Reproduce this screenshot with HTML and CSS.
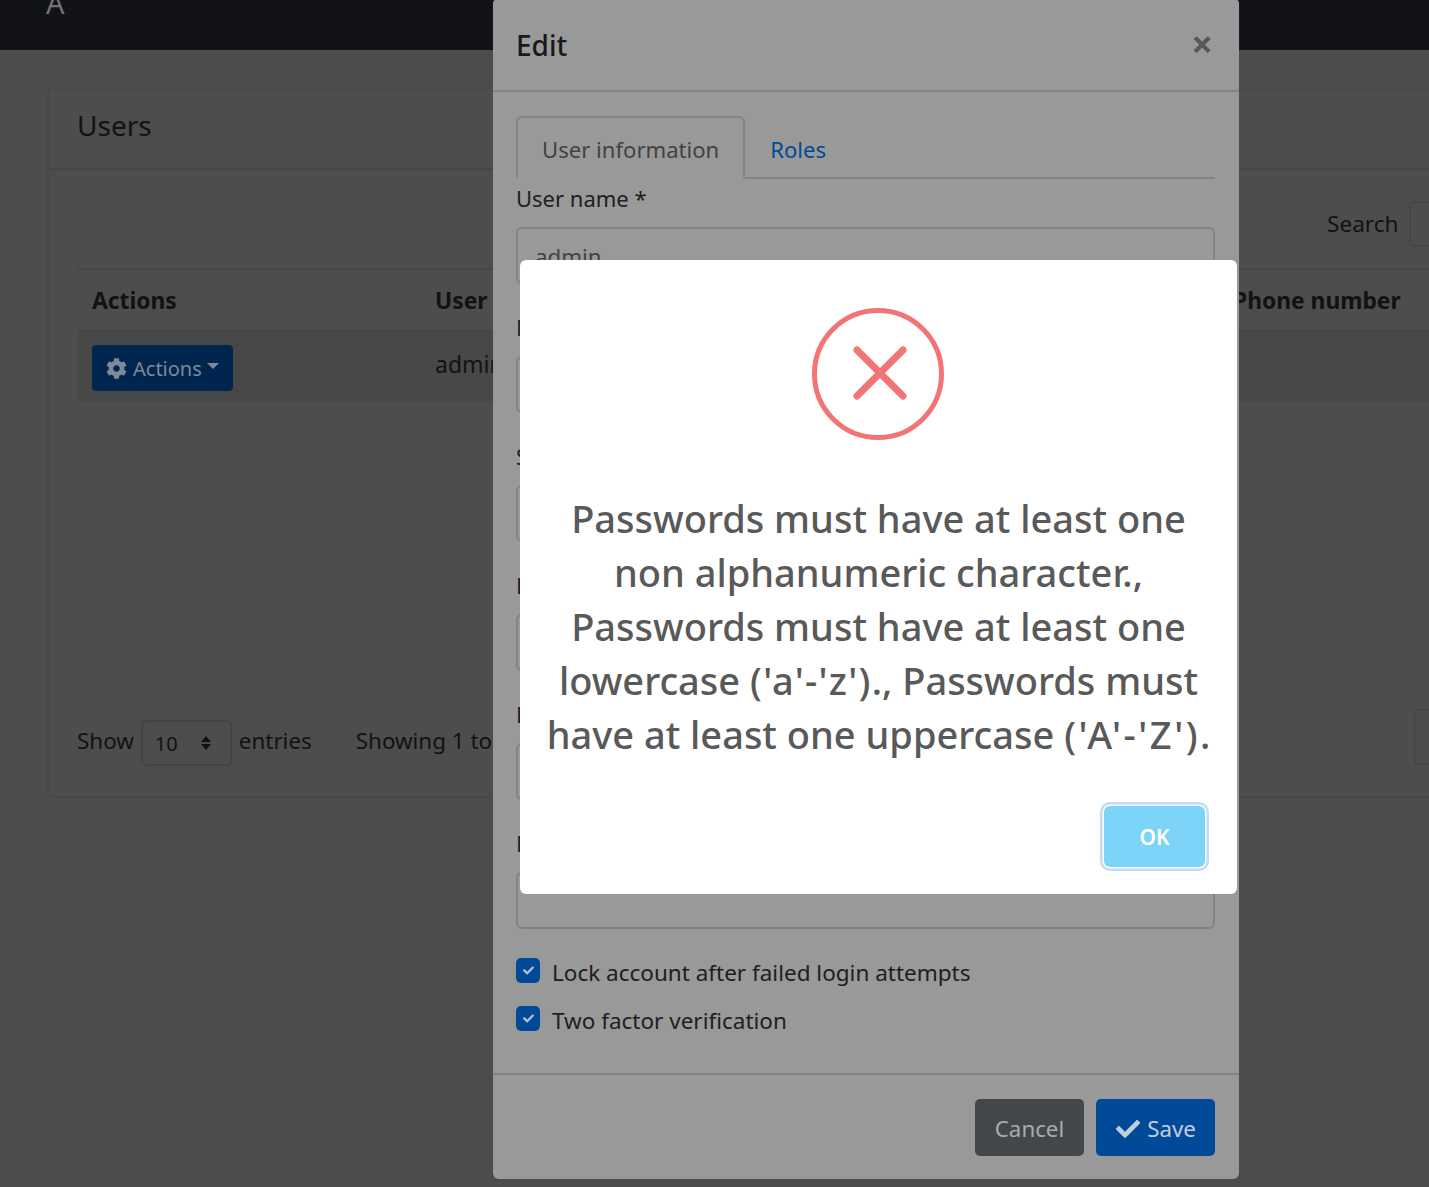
FILE: index.html
```html
<!DOCTYPE html>
<html lang="en">
<head>
<meta charset="utf-8">
<title>Users</title>
<link rel="stylesheet" href="styles.css">
</head>
<body>
<header class="navbar"><span class="brand">A</span></header>
<main class="card">
  <div class="card-head">Users</div>
  <div class="card-body">
    <div class="search-row"><span>Search</span><span class="search-box"></span></div>
    <div class="table">
      <div class="t-head">
        <div class="col-actions">Actions</div>
        <div class="col-user">User name</div>
        <div class="col-phone">Phone number</div>
      </div>
      <div class="t-row">
        <div class="col-actions">
          <span class="btn-actions">
            <svg class="gear" viewBox="0 0 512 512"><path d="M487.4 315.7l-42.6-24.6c4.3-23.2 4.3-47 0-70.2l42.6-24.6c4.9-2.8 7.1-8.6 5.5-14-11.1-35.6-30-67.8-54.7-94.6-3.8-4.1-10-5.1-14.8-2.3L380.8 110c-17.9-15.4-38.5-27.3-60.8-35.1V25.8c0-5.6-3.9-10.5-9.4-11.7-36.7-8.2-74.3-7.8-109.2 0-5.5 1.2-9.4 6.1-9.4 11.7V75c-22.2 7.9-42.8 19.8-60.8 35.1L88.7 85.5c-4.9-2.8-11-1.9-14.8 2.3-24.7 26.7-43.6 58.9-54.7 94.6-1.7 5.4.6 11.2 5.5 14L67.3 221c-4.3 23.2-4.3 47 0 70.2l-42.6 24.6c-4.9 2.8-7.1 8.6-5.5 14 11.1 35.6 30 67.8 54.7 94.6 3.8 4.1 10 5.1 14.8 2.3l42.6-24.6c17.9 15.4 38.5 27.3 60.8 35.1v49.2c0 5.6 3.9 10.5 9.4 11.7 36.7 8.2 74.3 7.8 109.2 0 5.5-1.2 9.4-6.1 9.4-11.7v-49.2c22.2-7.9 42.8-19.8 60.8-35.1l42.6 24.6c4.9 2.8 11 1.9 14.8-2.3 24.7-26.7 43.6-58.9 54.7-94.6 1.5-5.5-.7-11.3-5.6-14.1zM256 336c-44.1 0-80-35.9-80-80s35.9-80 80-80 80 35.9 80 80-35.9 80-80 80z"/></svg>
            <span>Actions</span><span class="caret"></span>
          </span>
        </div>
        <div class="col-user cell-text">admin</div>
      </div>
    </div>
    <div class="t-foot">
      <span>Show</span>
      <span class="select"><span>10</span><svg class="sort" viewBox="0 0 12 16"><path d="M6 1l5 6H1zM1 9h10l-5 6z"/></svg></span>
      <span>entries</span>
      <span class="showing">Showing 1 to 1 of 1 entries</span>
      <span class="pager"></span>
    </div>
  </div>
</main>

<section class="modal">
  <div class="modal-head"><span class="modal-title">Edit</span><span class="modal-close">×</span></div>
  <div class="modal-body">
    <div class="tabs"><span class="tab active">User information</span><span class="tab">Roles</span></div>
    <label class="field-label">User name *</label><div class="input"><span>admin</span></div>
    <label class="field-label">Name</label><div class="input"></div>
    <label class="field-label">Surname</label><div class="input"></div>
    <label class="field-label">Email address *</label><div class="input"></div>
    <label class="field-label">Phone number</label><div class="input"></div>
    <label class="field-label">Password</label><div class="input"></div>
    <div class="check-row first"><span class="check"><svg viewBox="0 0 512 512"><path d="M173.898 439.404l-166.4-166.4c-9.997-9.997-9.997-26.206 0-36.204l36.203-36.204c9.997-9.998 26.207-9.998 36.204 0L192 312.69 432.095 72.596c9.997-9.997 26.207-9.997 36.204 0l36.203 36.204c9.997 9.997 9.997 26.206 0 36.204l-294.4 294.401c-9.998 9.997-26.207 9.997-36.204-.001z"/></svg></span><span>Lock account after failed login attempts</span></div>
    <div class="check-row"><span class="check"><svg viewBox="0 0 512 512"><path d="M173.898 439.404l-166.4-166.4c-9.997-9.997-9.997-26.206 0-36.204l36.203-36.204c9.997-9.998 26.207-9.998 36.204 0L192 312.69 432.095 72.596c9.997-9.997 26.207-9.997 36.204 0l36.203 36.204c9.997 9.997 9.997 26.206 0 36.204l-294.4 294.401c-9.998 9.997-26.207 9.997-36.204-.001z"/></svg></span><span>Two factor verification</span></div>
  </div>
  <div class="modal-foot">
    <span class="btn btn-cancel">Cancel</span>
    <span class="btn btn-save"><svg class="save-check" viewBox="0 0 512 512"><path d="M173.898 439.404l-166.4-166.4c-9.997-9.997-9.997-26.206 0-36.204l36.203-36.204c9.997-9.998 26.207-9.998 36.204 0L192 312.69 432.095 72.596c9.997-9.997 26.207-9.997 36.204 0l36.203 36.204c9.997 9.997 9.997 26.206 0 36.204l-294.4 294.401c-9.998 9.997-26.207 9.997-36.204-.001z"/></svg><span>Save</span></span>
  </div>
</section>

<section class="alert">
  <svg class="alert-icon" viewBox="0 0 132 132">
    <circle cx="66" cy="66" r="63.5" fill="none" stroke="#f27474" stroke-width="5"/>
    <path d="M45 42L91 88M91 42L45 88" fill="none" stroke="#f27474" stroke-width="7" stroke-linecap="round"/>
  </svg>
  <p class="alert-text">Passwords must have at least one non alphanumeric character., Passwords must have at least one lowercase <span class="range-lower">('a'-'z')</span>., Passwords must have at least one uppercase <span class="range-upper">('A'-'Z')</span>.</p>
  <div class="alert-actions"><span class="btn-ok">OK</span></div>
</section>
</body>
</html>
```

FILE: styles.css
```css
* { box-sizing: border-box; }
html, body { margin: 0; height: 1187px; overflow: hidden; }
body {
  position: relative;
  width: 1429px;
  background: #4b4d4c;
  color: #101214;
  font-family: "Noto Sans", "Open Sans", sans-serif;
  font-size: 22.3px;
}

/* Page behind the dialogs */
.navbar {
  height: 50px;
  background: #111316;
  padding-left: 46px;
  overflow: hidden;
}
.brand {
  display: block;
  margin-top: -14px;
  line-height: 34px;
  font-size: 29px;
  color: #717375;
}
.card {
  width: 1500px;
  height: 711px;
  margin: 37px 0 0 47px;
  background: #4d4d4d;
  border: 2px solid #474848;
  border-radius: 5px;
}
.card-head {
  height: 81px;
  padding-left: 28px;
  border-bottom: 2px solid #464646;
  font-size: 28px;
  line-height: 72px;
}
.card-body { padding: 0 0 0 28px; }
.search-row {
  height: 98px;
  display: flex;
  align-items: center;
  justify-content: flex-start;
  padding: 9px 0 0 1250px;
  gap: 10px;
  font-size: 22.6px;
}
.search-box {
  width: 100px;
  height: 46px;
  border: 2px solid #464646;
  border-radius: 5px;
}
.table { width: 1400px; }
.t-head {
  display: flex;
  height: 64px;
  align-items: center;
  border-top: 2px solid #464646;
  border-bottom: 2px solid #444545;
  font-weight: 700;
  font-size: 22.8px;
}
.t-row {
  display: flex;
  height: 70px;
  padding-top: 2px;
  align-items: center;
  background: #484848;
}
.col-actions { width: 343px; padding-left: 15px; }
.col-user { width: 813px; padding-left: 15px; }
.col-phone { width: 200px; padding-left: 0; }
.cell-text { padding-bottom: 9px; font-size: 23px; }
.btn-actions {
  display: inline-flex;
  align-items: center;
  width: 141px;
  height: 46px;
  padding-left: 14px;
  background: #00264f;
  border-radius: 4px;
  color: #7d8a99;
  font-size: 20px;
}
.gear { width: 21px; height: 21px; margin-right: 6px; fill: #7d8a99; }
.caret {
  width: 0;
  height: 0;
  margin: 0 0 5px 5px;
  border-left: 6px solid transparent;
  border-right: 6px solid transparent;
  border-top: 6px solid #7d8a99;
}
.t-foot {
  display: flex;
  align-items: flex-start;
  height: 46px;
  margin-top: 318px;
  font-size: 22.4px;
  line-height: 41px;
}
.select {
  display: inline-flex;
  align-items: center;
  justify-content: space-between;
  width: 91px;
  height: 46px;
  margin: 0 7px;
  padding: 0 18px 0 12px;
  border: 2px solid #444;
  border-radius: 5px;
  font-size: 20px;
}
.sort { width: 12px; height: 16px; fill: #101214; }
.showing { margin-left: 44px; }
.pager {
  position: absolute;
  left: 1414px;
  top: 709px;
  width: 40px;
  height: 56px;
  border: 2px solid #464646;
  border-radius: 5px;
}

/* Edit dialog */
.modal {
  position: absolute;
  left: 493px;
  top: -2px;
  width: 746px;
  height: 1181px;
  background: #999;
  border-radius: 6px;
  box-shadow: 0 0 1px #555;
}
.modal-head {
  display: flex;
  align-items: center;
  justify-content: space-between;
  height: 94px;
  padding: 2px 26px 0 23px;
  border-bottom: 2px solid #7f8488;
}
.modal-title { font-size: 28px; color: #16181a; font-weight: 500; }
.modal-close { margin-bottom: 4px; font-size: 38px; font-weight: 700; color: #54585b; line-height: 1; }
.modal-body { padding: 24px 24px 0 23px; }
.tabs {
  display: flex;
  height: 63px;
  border-bottom: 2px solid #7f8488;
  font-size: 22.1px;
}
.tab {
  height: 63px;
  padding: 0 25px;
  line-height: 67px;
  color: #004a99;
}
.tab.active {
  border: 2px solid #7f8488;
  border-bottom-color: #999;
  border-radius: 6px 6px 0 0;
  padding: 0 24px;
  line-height: 63px;
  color: #3f4346;
}
.field-label {
  display: block;
  height: 48px;
  line-height: 38px;
  font-size: 22px;
  color: #1d2022;
}
.input {
  height: 57px;
  margin-bottom: 24px;
  padding: 12px 17px;
  border: 2px solid #7f8488;
  border-radius: 6px;
  color: #3f4346;
  line-height: 32px;
}
.check-row {
  display: flex;
  align-items: center;
  gap: 12px;
  height: 48px;
  font-size: 22.5px;
  color: #1d2022;
}
.check-row.first { margin-top: -5px; }
.check {
  display: flex;
  align-items: center;
  justify-content: center;
  width: 24px;
  height: 25px;
  margin-bottom: 4px;
  background: #004a99;
  border-radius: 5px;
}
.check svg { width: 11px; height: 11px; fill: #b8c4d2; }
.modal-foot {
  position: absolute;
  left: 0;
  right: 0;
  top: 1075px;
  height: 106px;
  display: flex;
  justify-content: flex-end;
  gap: 12px;
  padding: 24px 24px 0;
  border-top: 2px solid #7f8488;
}
.btn {
  display: flex;
  align-items: center;
  justify-content: center;
  height: 57px;
  padding-top: 2px;
  border-radius: 5px;
  color: #a8abad;
}
.btn-cancel { width: 109px; background: #434749; }
.btn-save { width: 119px; background: #004a99; gap: 6px; color: #c3cedb; }
.save-check { width: 26px; height: 24px; fill: #c3cedb; }

/* Error alert */
.alert {
  position: absolute;
  left: 520px;
  top: 260px;
  width: 717px;
  height: 634px;
  background: #fff;
  border-radius: 6px;
  text-align: center;
  padding-top: 48px;
}
.alert-icon { display: block; width: 132px; height: 132px; margin: 0 auto 0 292px; }
.alert-text {
  margin: 51px 0 0;
  padding: 0 21px;
  font-size: 38px;
  font-weight: 500;
  line-height: 54px;
  color: #595959;
}
.range-lower { letter-spacing: 1.3px; white-space: nowrap; }
.range-upper { letter-spacing: 2.5px; white-space: nowrap; }
.alert-actions {
  position: absolute;
  right: 32px;
  bottom: 27px;
}
.btn-ok {
  display: flex;
  align-items: center;
  justify-content: center;
  width: 101px;
  height: 61px;
  background: #7ed3f9;
  border-radius: 6px;
  color: #fff;
  font-size: 21px;
  font-weight: 600;
  box-shadow: 0 0 0 1.5px #fff, 0 0 0 4px #c3dcee;
}
```
